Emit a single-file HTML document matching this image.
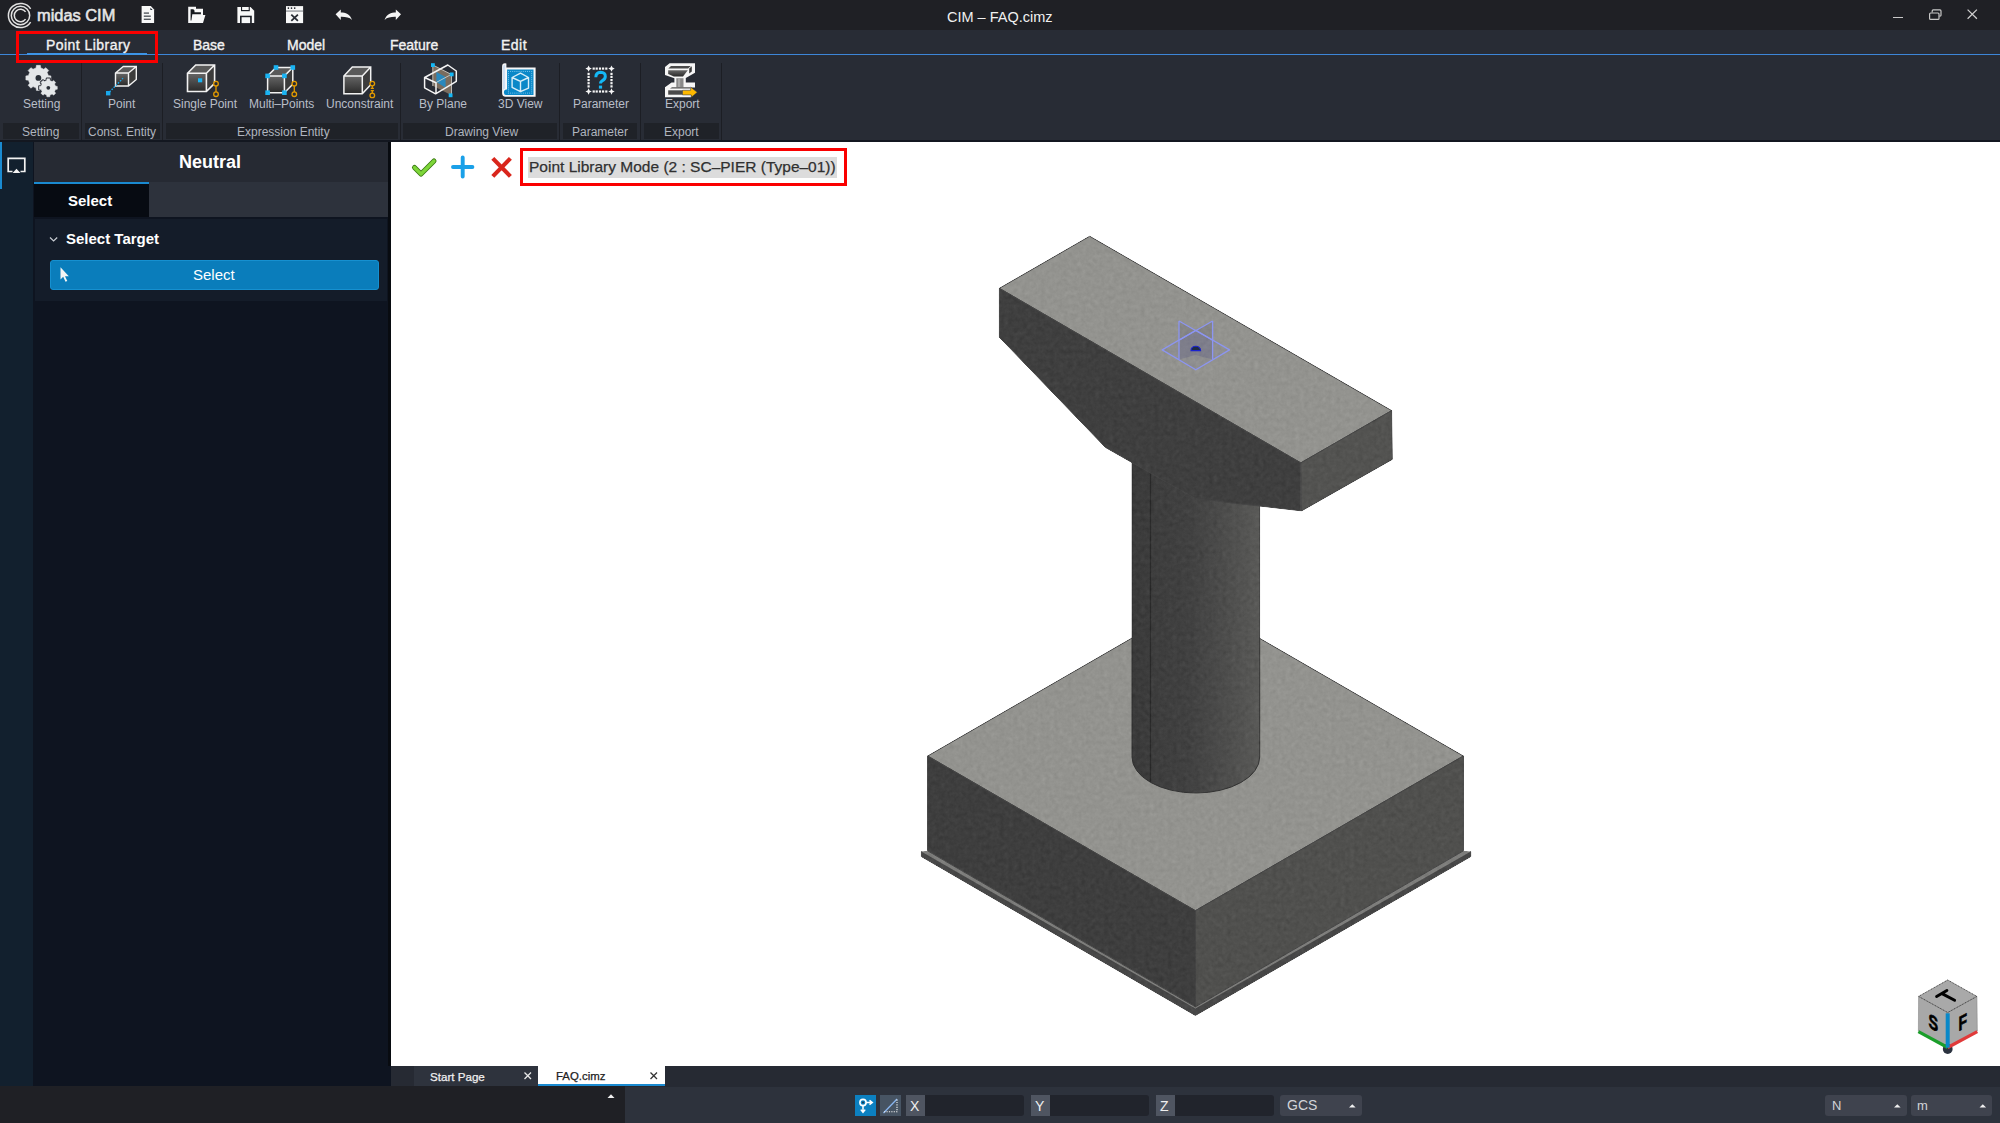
<!DOCTYPE html>
<html><head><meta charset="utf-8">
<style>
*{margin:0;padding:0;box-sizing:border-box}
html,body{width:2000px;height:1123px;overflow:hidden;background:#262a33;font-family:"Liberation Sans",sans-serif}
.a{position:absolute}
.t{position:absolute;white-space:nowrap;line-height:1}
#title{left:0;top:0;width:2000px;height:30px;background:#1f2025}
#menu{left:0;top:30px;width:2000px;height:25px;background:#282c35}
#ribbon{left:0;top:55px;width:2000px;height:87px;background:#282c35}
.mt{color:#f2f2f2;font-size:14px;top:37.5px;-webkit-text-stroke:0.35px #f2f2f2}
.rl{color:#b9bec8;font-size:12px;top:97.5px}
.gl{top:123px;height:16px;background:#1f2228}
.gt{color:#b0b5bf;font-size:12px;top:126px}
.sep{top:63px;width:1px;height:77px;background:#1c1e24}
</style></head><body>
<div id="title" class="a"></div>
<div id="menu" class="a"></div>
<div id="ribbon" class="a"></div>

<!-- logo -->
<svg class="a" style="left:4px;top:0px" width="34" height="32" viewBox="4 0 34 32">
 <g fill="none" stroke="#e2e2e2" stroke-width="1.5">
  <path d="M30.65,8.91 A12.1,12.1 0 1 0 30.65,22.09"/>
  <circle cx="20.5" cy="15.5" r="9.2"/>
  <path d="M25.58,11.94 A6.2,6.2 0 1 0 25.58,19.06"/>
 </g>
</svg>
<div class="t" style="left:37px;top:7px;font-size:16.4px;color:#e6e6e6;-webkit-text-stroke:0.55px #e6e6e6">midas CIM</div>
<!-- title -->
<div class="t" style="left:947px;top:10px;font-size:14.5px;color:#f0f0f0">CIM &#8211; FAQ.cimz</div>

<!-- window controls -->
<div class="a" style="left:1892.6px;top:16.5px;width:10.5px;height:1.3px;background:#c8c8c8"></div>
<svg class="a" style="left:1926px;top:7px" width="18" height="15" viewBox="1926 7 18 15"><g fill="none" stroke="#c8c8c8" stroke-width="1.2"><rect x="1929.6" y="13" width="9.4" height="6.4" rx="1"/><path d="M1932.2,12.6 V10.9 Q1932.2,9.9 1933.2,9.9 H1940 Q1941,9.9 1941,10.9 V15.3 Q1941,16.1 1940,16.1 H1939.4"/></g></svg>
<svg class="a" style="left:1965px;top:7px" width="15" height="14" viewBox="1965 7 15 14"><g stroke="#cfcfcf" stroke-width="1.25"><path d="M1967.6,9.6 L1976.9,18.7 M1976.9,9.6 L1967.6,18.7"/></g></svg>

<!-- menu tabs -->
<div class="a" style="left:0;top:54px;width:2000px;height:1.3px;background:#3d86d8"></div>
<div class="a" style="left:0;top:140px;width:2000px;height:2px;background:#131720"></div>
<div class="a" style="left:27px;top:53px;width:120px;height:2px;background:#3d95e8"></div>
<div class="t mt" style="left:46px;letter-spacing:0.45px">Point Library</div>
<div class="t mt" style="left:193px">Base</div>
<div class="t mt" style="left:287px">Model</div>
<div class="t mt" style="left:390px">Feature</div>
<div class="t mt" style="left:501px;letter-spacing:0.5px">Edit</div>
<div class="a" style="left:16px;top:31px;width:142px;height:32px;border:3px solid #fa0000"></div>

<!-- ribbon group strips -->
<div class="a gl" style="left:3px;width:76px"></div>
<div class="a gl" style="left:85px;width:75px"></div>
<div class="a gl" style="left:166px;width:232px"></div>
<div class="a gl" style="left:403px;width:154px"></div>
<div class="a gl" style="left:563px;width:74px"></div>
<div class="a gl" style="left:644px;width:75px"></div>
<div class="a sep" style="left:81px"></div>
<div class="a sep" style="left:162px"></div>
<div class="a sep" style="left:400px"></div>
<div class="a sep" style="left:559px"></div>
<div class="a sep" style="left:640px"></div>
<div class="a sep" style="left:721px"></div>

<div class="t gt" style="left:22px">Setting</div>
<div class="t gt" style="left:88px">Const. Entity</div>
<div class="t gt" style="left:237px">Expression Entity</div>
<div class="t gt" style="left:445px">Drawing View</div>
<div class="t gt" style="left:572px">Parameter</div>
<div class="t gt" style="left:664px">Export</div>

<div class="t rl" style="left:23px">Setting</div>
<div class="t rl" style="left:108px">Point</div>
<div class="t rl" style="left:173px">Single Point</div>
<div class="t rl" style="left:249px">Multi&#8211;Points</div>
<div class="t rl" style="left:326px">Unconstraint</div>
<div class="t rl" style="left:419px">By Plane</div>
<div class="t rl" style="left:498px">3D View</div>
<div class="t rl" style="left:573px">Parameter</div>
<div class="t rl" style="left:665px">Export</div>

<svg class="a" style="left:0;top:55px" width="730" height="60" viewBox="0 55 730 60"><defs><linearGradient id="cubeg" x1="0" x2="0" y1="0" y2="1"><stop offset="0" stop-color="#666"/><stop offset="1" stop-color="#2a2a2a"/></linearGradient></defs><path d="M34.50,68.48 L36.02,67.98 L36.41,65.36 L40.39,65.36 L40.78,67.98 L42.30,68.48 L43.73,69.20 L45.86,67.63 L48.67,70.44 L47.10,72.57 L47.82,74.00 L48.32,75.52 L50.94,75.91 L50.94,79.89 L48.32,80.28 L47.82,81.80 L47.10,83.23 L48.67,85.36 L45.86,88.17 L43.73,86.60 L42.30,87.32 L40.78,87.82 L40.39,90.44 L36.41,90.44 L36.02,87.82 L34.50,87.32 L33.07,86.60 L30.94,88.17 L28.13,85.36 L29.70,83.23 L28.98,81.80 L28.48,80.28 L25.86,79.89 L25.86,75.91 L28.48,75.52 L28.98,74.00 L29.70,72.57 L28.13,70.44 L30.94,67.63 L33.07,69.20Z" fill="#e4e7e9" stroke="#e4e7e9" stroke-width="0.5" stroke-linejoin="round"/><circle cx="38.4" cy="77.9" r="2.9" fill="#2a3038"/><path d="M45.51,81.06 L46.60,80.70 L46.88,78.81 L49.72,78.81 L50.00,80.70 L51.09,81.06 L52.11,81.58 L53.65,80.44 L55.66,82.45 L54.52,83.99 L55.04,85.01 L55.40,86.10 L57.29,86.38 L57.29,89.22 L55.40,89.50 L55.04,90.59 L54.52,91.61 L55.66,93.15 L53.65,95.16 L52.11,94.02 L51.09,94.54 L50.00,94.90 L49.72,96.79 L46.88,96.79 L46.60,94.90 L45.51,94.54 L44.49,94.02 L42.95,95.16 L40.94,93.15 L42.08,91.61 L41.56,90.59 L41.20,89.50 L39.31,89.22 L39.31,86.38 L41.20,86.10 L41.56,85.01 L42.08,83.99 L40.94,82.45 L42.95,80.44 L44.49,81.58Z" fill="#282c35" stroke="#282c35" stroke-width="2.4" stroke-linejoin="round"/><path d="M45.51,81.06 L46.60,80.70 L46.88,78.81 L49.72,78.81 L50.00,80.70 L51.09,81.06 L52.11,81.58 L53.65,80.44 L55.66,82.45 L54.52,83.99 L55.04,85.01 L55.40,86.10 L57.29,86.38 L57.29,89.22 L55.40,89.50 L55.04,90.59 L54.52,91.61 L55.66,93.15 L53.65,95.16 L52.11,94.02 L51.09,94.54 L50.00,94.90 L49.72,96.79 L46.88,96.79 L46.60,94.90 L45.51,94.54 L44.49,94.02 L42.95,95.16 L40.94,93.15 L42.08,91.61 L41.56,90.59 L41.20,89.50 L39.31,89.22 L39.31,86.38 L41.20,86.10 L41.56,85.01 L42.08,83.99 L40.94,82.45 L42.95,80.44 L44.49,81.58Z" fill="#e4e7e9" stroke="#e4e7e9" stroke-width="0.5" stroke-linejoin="round"/><circle cx="48.3" cy="87.8" r="1.9" fill="#2a3038"/><polygon points="115.5,73 123.3,66.5 136.3,66.5 128.5,73" fill="#5a5a5a"/><polygon points="128.5,73 136.3,66.5 136.3,79.5 128.5,86" fill="#3c3c3c"/><rect x="115.5" y="73" width="13.0" height="13" fill="url(#cubeg)"/><path d="M115.5,73 L123.3,66.5 H136.3 V79.5 L128.5,86 H115.5 Z M115.5,73 H128.5 V86 M128.5,73 L136.3,66.5" fill="none" stroke="#f2f2f2" stroke-width="1.4" stroke-linejoin="miter"/><path d="M109.5,92 L123,78.2" stroke="#19a8ec" stroke-width="1.4" stroke-dasharray="1.6,1.4"/><rect x="106" y="91" width="4.4" height="4.4" fill="#19a8ec"/><polygon points="187.5,73.2 195.7,65.0 214.6,65.0 206.4,73.2" fill="#5a5a5a"/><polygon points="206.4,73.2 214.6,65.0 214.6,83.3 206.4,91.5" fill="#3c3c3c"/><rect x="187.5" y="73.2" width="18.900000000000006" height="18.299999999999997" fill="url(#cubeg)"/><path d="M187.5,73.2 L195.7,65.0 H214.6 V83.3 L206.4,91.5 H187.5 Z M187.5,73.2 H206.4 V91.5 M206.4,73.2 L214.6,65.0" fill="none" stroke="#f2f2f2" stroke-width="1.6" stroke-linejoin="miter"/><rect x="198" y="78.3" width="4.2" height="4" fill="#19b4f4"/><g stroke="#e39b00" stroke-width="1.3" fill="#282c35"><path d="M216,83.7 V94.2" fill="none"/><circle cx="216" cy="83.7" r="2.3"/><circle cx="216" cy="94.2" r="2.3"/></g><polygon points="267.6,75.9 276.0,67.5 292.79999999999995,67.5 284.4,75.9" fill="#5a5a5a"/><polygon points="284.4,75.9 292.79999999999995,67.5 292.79999999999995,84.3 284.4,92.7" fill="#3c3c3c"/><rect x="267.6" y="75.9" width="16.799999999999955" height="16.799999999999997" fill="url(#cubeg)"/><path d="M267.6,75.9 L276.0,67.5 H292.79999999999995 V84.3 L284.4,92.7 H267.6 Z M267.6,75.9 H284.4 V92.7 M284.4,75.9 L292.79999999999995,67.5" fill="none" stroke="#f2f2f2" stroke-width="1.5" stroke-linejoin="miter"/><rect x="265.3" y="73.60000000000001" width="4.6" height="4.6" fill="#19b4f4"/><rect x="282.09999999999997" y="73.60000000000001" width="4.6" height="4.6" fill="#19b4f4"/><rect x="265.3" y="90.4" width="4.6" height="4.6" fill="#19b4f4"/><rect x="282.09999999999997" y="90.4" width="4.6" height="4.6" fill="#19b4f4"/><rect x="273.7" y="65.2" width="4.6" height="4.6" fill="#19b4f4"/><rect x="290.5" y="65.2" width="4.6" height="4.6" fill="#19b4f4"/><g stroke="#e39b00" stroke-width="1.3" fill="#282c35"><path d="M294.3,83.7 V94.2" fill="none"/><circle cx="294.3" cy="83.7" r="2.3"/><circle cx="294.3" cy="94.2" r="2.3"/></g><polygon points="343.9,75.9 352.29999999999995,66.9 370.7,66.9 362.3,75.9" fill="#5a5a5a"/><polygon points="362.3,75.9 370.7,66.9 370.7,84.7 362.3,93.7" fill="#3c3c3c"/><rect x="343.9" y="75.9" width="18.400000000000034" height="17.799999999999997" fill="url(#cubeg)"/><path d="M343.9,75.9 L352.29999999999995,66.9 H370.7 V84.7 L362.3,93.7 H343.9 Z M343.9,75.9 H362.3 V93.7 M362.3,75.9 L370.7,66.9" fill="none" stroke="#f2f2f2" stroke-width="1.5" stroke-linejoin="miter"/><g stroke="#e39b00" stroke-width="1.3" fill="#282c35"><path d="M372.3,86.0 V88.3 M372.3,90.7 V93.0 M370.7,88.3 h3.2 M370.7,90.7 h3.2" fill="none"/><circle cx="372.3" cy="83.6" r="2.3"/><circle cx="372.3" cy="95.4" r="2.3"/></g><polygon points="432.8,65 451.5,74.5 451.5,95.3 432.8,85.8" fill="#7a6c5e"/>
<polygon points="436.4,72.1 445.6,77.1 445.6,87.8 436.4,82.1" fill="#2a88bc"/>
<g fill="none" stroke="#d8d4cc" stroke-width="0.9" opacity="0.9"><path d="M432.8,65 V86 M451.5,74.5 V95.3 M432.8,65 L451.5,74.5 M436.4,82.4 L451.5,74.3"/></g>
<g fill="none" stroke="#f4f4f4" stroke-width="1.5" stroke-linejoin="round">
<path d="M424.6,77.5 V87.8 L435.6,93.8 L451,84.6 L456.3,81.4 V71 L447.8,65 L424.6,77.5 L436,82.8 V93.5"/>
</g>
<g fill="#14b8f6"><rect x="431" y="63.2" width="3.8" height="3.8"/><rect x="449.8" y="72.5" width="3.8" height="3.8"/><rect x="448.7" y="93.4" width="3.8" height="3.8"/></g>
<path d="M502.1,66.5 Q502.1,63.2 505,63.2 L506.4,63.4 V67.5 H535.6 V96.7 H505.5 Q502.1,96.7 502.1,93 Z" fill="#f8f8f8"/>
<path d="M503,67 Q503.2,64.6 505.2,64.5 V88.6 Q503.4,89.2 503,90 Z" fill="#cfe0f4"/>
<path d="M507.1,69.6 H533.5 V94.9 H506 Q503.9,94.9 503.9,92.4 Q503.9,89.8 506.5,89.6 H507.1 Z" fill="#0a88c8"/>
<g fill="#8fd0f2"><rect x="508.05" y="70.95" width="0.9" height="0.9"/><rect x="508.05" y="92.65" width="0.9" height="0.9"/><rect x="510.16" y="70.95" width="0.9" height="0.9"/><rect x="510.16" y="92.65" width="0.9" height="0.9"/><rect x="512.27" y="70.95" width="0.9" height="0.9"/><rect x="512.27" y="92.65" width="0.9" height="0.9"/><rect x="514.38" y="70.95" width="0.9" height="0.9"/><rect x="514.38" y="92.65" width="0.9" height="0.9"/><rect x="516.49" y="70.95" width="0.9" height="0.9"/><rect x="516.49" y="92.65" width="0.9" height="0.9"/><rect x="518.60" y="70.95" width="0.9" height="0.9"/><rect x="518.60" y="92.65" width="0.9" height="0.9"/><rect x="520.70" y="70.95" width="0.9" height="0.9"/><rect x="520.70" y="92.65" width="0.9" height="0.9"/><rect x="522.81" y="70.95" width="0.9" height="0.9"/><rect x="522.81" y="92.65" width="0.9" height="0.9"/><rect x="524.92" y="70.95" width="0.9" height="0.9"/><rect x="524.92" y="92.65" width="0.9" height="0.9"/><rect x="527.03" y="70.95" width="0.9" height="0.9"/><rect x="527.03" y="92.65" width="0.9" height="0.9"/><rect x="529.14" y="70.95" width="0.9" height="0.9"/><rect x="529.14" y="92.65" width="0.9" height="0.9"/><rect x="531.25" y="70.95" width="0.9" height="0.9"/><rect x="531.25" y="92.65" width="0.9" height="0.9"/><rect x="508.05" y="72.92" width="0.9" height="0.9"/><rect x="531.25" y="72.92" width="0.9" height="0.9"/><rect x="508.05" y="74.90" width="0.9" height="0.9"/><rect x="531.25" y="74.90" width="0.9" height="0.9"/><rect x="508.05" y="76.87" width="0.9" height="0.9"/><rect x="531.25" y="76.87" width="0.9" height="0.9"/><rect x="508.05" y="78.84" width="0.9" height="0.9"/><rect x="531.25" y="78.84" width="0.9" height="0.9"/><rect x="508.05" y="80.81" width="0.9" height="0.9"/><rect x="531.25" y="80.81" width="0.9" height="0.9"/><rect x="508.05" y="82.79" width="0.9" height="0.9"/><rect x="531.25" y="82.79" width="0.9" height="0.9"/><rect x="508.05" y="84.76" width="0.9" height="0.9"/><rect x="531.25" y="84.76" width="0.9" height="0.9"/><rect x="508.05" y="86.73" width="0.9" height="0.9"/><rect x="531.25" y="86.73" width="0.9" height="0.9"/><rect x="508.05" y="88.70" width="0.9" height="0.9"/><rect x="531.25" y="88.70" width="0.9" height="0.9"/><rect x="508.05" y="90.68" width="0.9" height="0.9"/><rect x="531.25" y="90.68" width="0.9" height="0.9"/></g>
<g fill="none" stroke="#d8eef8" stroke-width="1.4" stroke-linejoin="round"><path d="M520.5,73.2 L528.5,77.5 V88.1 L520.5,91.7 L512.1,87.4 V77.5 Z M512.1,77.5 L520.5,81.4 L528.5,77.5 M520.5,81.4 V91.7"/></g>
<g fill="#f6f6f6"><rect x="592.60" y="67.5" width="2.2" height="2.2"/><rect x="592.60" y="90.4" width="2.2" height="2.2"/><rect x="595.60" y="67.5" width="2.2" height="2.2"/><rect x="595.60" y="90.4" width="2.2" height="2.2"/><rect x="598.90" y="67.5" width="2.2" height="2.2"/><rect x="598.90" y="90.4" width="2.2" height="2.2"/><rect x="602.00" y="67.5" width="2.2" height="2.2"/><rect x="602.00" y="90.4" width="2.2" height="2.2"/><rect x="605.20" y="67.5" width="2.2" height="2.2"/><rect x="605.20" y="90.4" width="2.2" height="2.2"/><rect x="587.5" y="72.80" width="2.2" height="2.2"/><rect x="610.4" y="72.80" width="2.2" height="2.2"/><rect x="587.5" y="75.80" width="2.2" height="2.2"/><rect x="610.4" y="75.80" width="2.2" height="2.2"/><rect x="587.5" y="79.00" width="2.2" height="2.2"/><rect x="610.4" y="79.00" width="2.2" height="2.2"/><rect x="587.5" y="82.10" width="2.2" height="2.2"/><rect x="610.4" y="82.10" width="2.2" height="2.2"/><rect x="587.5" y="85.30" width="2.2" height="2.2"/><rect x="610.4" y="85.30" width="2.2" height="2.2"/><path d="M585.4,68.6 L587.6,67.5 L588.6,65.39999999999999 L589.6,67.5 L591.8000000000001,68.6 L589.6,69.69999999999999 L588.6,71.8 L587.6,69.69999999999999 Z"/><path d="M608.3,68.6 L610.5,67.5 L611.5,65.39999999999999 L612.5,67.5 L614.7,68.6 L612.5,69.69999999999999 L611.5,71.8 L610.5,69.69999999999999 Z"/><path d="M585.4,91.5 L587.6,90.4 L588.6,88.3 L589.6,90.4 L591.8000000000001,91.5 L589.6,92.6 L588.6,94.7 L587.6,92.6 Z"/><path d="M608.3,91.5 L610.5,90.4 L611.5,88.3 L612.5,90.4 L614.7,91.5 L612.5,92.6 L611.5,94.7 L610.5,92.6 Z"/></g><path d="M595.8,77.2 Q596,72.4 600.6,72.3 Q605.4,72.4 605.3,76.6 Q605.2,79 602.4,80.6 Q600.4,81.8 600.4,83.6" fill="none" stroke="#14b8f6" stroke-width="3"/><rect x="598.9" y="85.6" width="3.2" height="3" fill="#14b8f6"/><path d="M669.6,63.2 H695 V72.7 L685.8,78 V82.6 H695 V87.6 H691 V97.2 H665 V87.3 L671.6,82.6 H674.4 V78.3 L665,75.1 V67 Z" fill="#f6f6f6"/>
<path d="M668.3,68.6 L671,65.9 H690.8 L688.1,68.6 Z" fill="#4a4a4a"/>
<path d="M689.2,68.6 L691.8,66.3 V71.6 L689.2,73.4 Z" fill="#3a3a3a"/>
<path d="M668.2,70.3 H687.8 L683,76.4 H673.9 L668.2,73.9 Z" fill="url(#cubeg)"/>
<rect x="676.3" y="78.2" width="7.2" height="9.2" fill="#8a8a8a"/>
<rect x="678" y="78.2" width="2.2" height="9.2" fill="#a8a8a8"/>
<path d="M670,88.4 L672,87.2 H690 L690.5,88.6 Z" fill="#555"/>
<rect x="668.2" y="90.3" width="14.5" height="4.4" fill="#4a4a4a"/>
<path d="M682.5,90.3 H690.6 V87.1 L697.3,92.3 L691.2,97.4 V94.9 H682.5 Z" fill="#fdb800" stroke="#1a2a50" stroke-width="0.5"/>
</svg>
<!-- left icon bar -->
<div class="a" style="left:0;top:142px;width:33px;height:944px;background:#12202e"></div>
<div class="a" style="left:0;top:142px;width:2px;height:47px;background:#1a8ad0"></div>
<!-- panel -->
<div class="a" style="left:33px;top:142px;width:358px;height:944px;background:#0e1420"></div>
<div class="a" style="left:34px;top:142px;width:354px;height:40px;background:#262a33"></div>
<div class="t" style="left:179px;top:153px;font-size:18px;font-weight:bold;color:#fff">Neutral</div>
<div class="a" style="left:34px;top:182px;width:354px;height:35px;background:#2d323c"></div>
<div class="a" style="left:34px;top:182px;width:115px;height:35px;background:#070b12;border-top:2px solid #1a8ad0"></div>
<div class="t" style="left:68px;top:193px;font-size:15px;font-weight:bold;color:#fff">Select</div>
<div class="a" style="left:35px;top:219px;width:352px;height:82px;background:#141c29"></div>
<div class="t" style="left:66px;top:231px;font-size:15px;font-weight:bold;color:#fff">Select Target</div>
<div class="a" style="left:50px;top:260px;width:329px;height:30px;background:#0a7dbb;border-radius:3px;border:1px solid #1690d0"></div>
<div class="t" style="left:193px;top:267px;font-size:15px;color:#fff">Select</div>

<!-- viewport -->
<div class="a" style="left:388px;top:142px;width:4px;height:924px;background:#080b10"></div>
<div class="a" style="left:391px;top:142px;width:1609px;height:924px;background:#fff"></div>


<!-- 3D model -->
<svg class="a" style="left:391px;top:142px" width="1609" height="924" viewBox="391 142 1609 924">
 <defs>
  <filter id="tex" filterUnits="userSpaceOnUse" x="900" y="220" width="600" height="810" color-interpolation-filters="sRGB">
   <feTurbulence type="fractalNoise" baseFrequency="0.22" numOctaves="3" seed="11" result="nz"/>
   <feColorMatrix in="nz" type="matrix" values="0.33 0.33 0.33 0 0  0.33 0.33 0.33 0 0  0.33 0.33 0.33 0 0  0 0 0 0 1" result="gn"/>
   <feComposite in="SourceGraphic" in2="gn" operator="arithmetic" k1="0" k2="1" k3="0.12" k4="-0.06" result="t"/>
   <feComposite in="t" in2="SourceAlpha" operator="in"/>
  </filter>
  <linearGradient id="colg" x1="0" x2="1" y1="0" y2="0">
   <stop offset="0" stop-color="#3a3a3a"/><stop offset="0.2" stop-color="#3e3e3e"/><stop offset="0.45" stop-color="#414141"/><stop offset="0.75" stop-color="#4e4e4d"/><stop offset="1" stop-color="#5a5a58"/>
  </linearGradient>
 </defs>
 <g filter="url(#tex)">
 <g stroke="#454545" stroke-width="1" stroke-linejoin="round">
  <!-- base plate -->
  <polygon points="921.3,851.5 1195.4,1008.6 1470.8,851.5 1470.8,856.6 1195.4,1015.5 921.3,856.6" fill="#474747"/>
  <polygon points="921.3,851.5 1195.4,1008.6 1470.8,851.5 1463.4,850.8 1195.4,1006.8 927.6,850.8" fill="#7d7d7b" stroke="none"/>
  <!-- footing -->
  <polygon points="1195.6,601.3 927.6,756 1195.4,910.7 1463.4,756" fill="#93938f"/>
  <polygon points="927.6,756 1195.4,910.7 1195.4,1006.8 927.6,850.8" fill="#3e3e3e"/>
  <polygon points="1195.4,910.7 1463.4,756 1463.4,850.8 1195.4,1006.8" fill="#50504e"/>
 </g>
 <!-- column -->
 <path d="M1132,440 V757 A63.8,36 0 0 0 1259.7,757 V440 Z" fill="url(#colg)" stroke="#2e2e2e" stroke-width="0.9"/>
 <line x1="1150.5" y1="470" x2="1150.5" y2="782" stroke="#2a2a2a" stroke-width="1.2"/>
 <g stroke="#454545" stroke-width="1" stroke-linejoin="round">
  <!-- cap -->
  <polygon points="1089.7,236.2 999.3,288.3 1300.8,462.9 1391.7,410.6" fill="#93938f"/>
  <polygon points="999.3,288.3 999.3,337.2 1105.5,447.5 1195.6,498.7 1300.8,510.8 1300.8,462.9" fill="#3f3f3f"/>
  <polygon points="1300.8,462.9 1391.7,410.6 1392.3,459.4 1301.4,511" fill="#535351"/>
 </g>
  </g>
 <!-- point marker -->
 <polygon points="1162.2,349.9 1195.8,330.3 1229.5,349.9 1195.8,369.8" fill="rgba(90,90,150,0.07)"/>
 <polygon points="1179,321 1195.8,330.3 1179,340.3" fill="rgba(40,40,70,0.13)"/>
 <polygon points="1212.6,321 1195.8,330.3 1212.6,340.3" fill="rgba(40,40,70,0.13)"/>
 <polygon points="1179,340.3 1195.8,330.3 1212.6,340.3 1212.6,359.6 1195.8,355 1179,359.6" fill="rgba(50,50,120,0.17)"/>
 <g stroke="#8c95f2" stroke-width="1.3" fill="none" stroke-linejoin="round">
  <polygon points="1162.2,349.9 1195.8,330.3 1229.5,349.9 1195.8,369.8"/>
  <path d="M1179,321 L1212.6,340.3 M1212.6,321 L1179,340.3 M1179,321 V359.6 M1212.6,321 V359.6"/>
 </g>
 <path d="M1191,350.6 A4.8,4.4 0 0 1 1200.6,350.6 Z" fill="#1d2a45" stroke="#1a22d0" stroke-width="1.1"/>
 <!-- view cube -->
 <g stroke="#888" stroke-width="0.6">
  <polygon points="1947.7,1012.5 1918.6,996.4 1918.4,1031 1947.7,1047" fill="#a8a8a8"/>
  <polygon points="1947.7,1012.5 1976.9,996.4 1977.3,1031 1947.7,1047" fill="#a8a8a8"/>
 </g>
 <polygon points="1947.7,980 1918.6,996.4 1947.7,1012.5 1976.9,996.4" fill="#a9a9a9" stroke="#3a3a3a" stroke-width="0.9" stroke-dasharray="1.2,0.6"/>
 <circle cx="1947.7" cy="1049" r="4.9" fill="#2b3340"/>
 <path d="M1918.4,1031.6 L1947.7,1047.5" stroke="#1a9e2a" stroke-width="3.2"/>
 <path d="M1947.7,1047.5 L1977.3,1031.6" stroke="#e03a3a" stroke-width="3.2"/>
 <path d="M1947.7,1013.3 L1947.7,1047.7" stroke="#0a88c8" stroke-width="4"/>
 <g fill="none" stroke="#000" stroke-width="2.9" stroke-linecap="round">
  <path d="M1936.6,996.6 L1946.9,990.6 M1942,993.6 L1954.6,1000.3"/>
 </g>
 <g transform="translate(1933.2,1022.2) matrix(1,0.55,0,1,0,0)"><text x="0" y="7.4" text-anchor="middle" font-family="Liberation Sans" font-weight="bold" font-size="20" transform="scale(0.72,1)" fill="#000" stroke="#000" stroke-width="0.7">S</text></g>
 <g transform="translate(1962.8,1021.6) matrix(1,-0.535,0,1,0,0)"><text x="0" y="7.4" text-anchor="middle" font-family="Liberation Sans" font-weight="bold" font-size="20" transform="scale(0.7,1)" fill="#000" stroke="#000" stroke-width="0.7">F</text></g>
</svg>

<!-- viewport toolbar -->
<svg class="a" style="left:405px;top:150px" width="120" height="36" viewBox="405 150 120 36">
 <path d="M414.5,167.5 L421,174 L434,161" fill="none" stroke="#3a7a10" stroke-width="5" stroke-linecap="round" stroke-linejoin="round"/>
 <path d="M414.5,167.5 L421,174 L434,161" fill="none" stroke="#7ed63a" stroke-width="3.2" stroke-linecap="round" stroke-linejoin="round"/>
 <path d="M462.7,157.4 V176.6 M453,167 H472.4" stroke="#1aa0e8" stroke-width="3.9" stroke-linecap="round"/>
 <path d="M492.8,158.4 L510.4,176.4 M510.4,158.4 L492.8,176.4" stroke="#d9261c" stroke-width="4.2" stroke-linecap="butt"/>
</svg>
<div class="a" style="left:520px;top:148px;width:327px;height:38px;border:3px solid #fa0000"></div>
<div class="a" style="left:528px;top:157px;width:309px;height:21px;background:#dcdcdc"></div>
<div class="t" style="left:529px;top:159px;font-size:15.5px;color:#303030;-webkit-text-stroke:0.25px #303030">Point Library Mode (2 : SC&#8211;PIER (Type&#8211;01))</div>

<!-- doc tabs -->
<div class="a" style="left:391px;top:1066px;width:1609px;height:20px;background:#262a33"></div>
<div class="a" style="left:414px;top:1066px;width:124px;height:20px;background:#2e333d"></div>
<div class="t" style="left:430px;top:1071px;font-size:11.6px;color:#f0f0f0;-webkit-text-stroke:0.25px #f0f0f0">Start Page</div>
<div class="a" style="left:538px;top:1066px;width:127px;height:20px;background:#fff;border-bottom:2px solid #1a8ad0"></div>
<div class="t" style="left:556px;top:1071px;font-size:11.4px;color:#222;-webkit-text-stroke:0.25px #222">FAQ.cimz</div>

<!-- status bar -->
<div class="a" style="left:0;top:1086px;width:625px;height:37px;background:#1f2025"></div>
<div class="a" style="left:625px;top:1086px;width:1375px;height:37px;background:#2d323c"></div>


<!-- title bar icons -->
<svg class="a" style="left:138px;top:4px" width="270" height="22" viewBox="138 4 270 22">
 <path d="M141.6,5.9 H150.8 L154.1,9.4 V22.9 H141.6 Z" fill="#f8f8f8"/>
 <path d="M150.4,7.8 L152.6,9.9 H150.4 Z" fill="#1a2530"/>
 <g fill="#555a60"><rect x="143.8" y="12.4" width="5.2" height="1.4"/><rect x="143.8" y="15.5" width="7" height="1.4"/><rect x="143.8" y="18.6" width="7" height="1.4"/></g>
 <!-- folder -->
 <path d="M188.2,6.8 H196 V8.7 H203 V15 H205.4 L203,22.9 H188.2 Z" fill="#f8f8f8"/>
 <path d="M190.6,9.2 H193.3 L194.5,10.6 V12.3 H200.9 V14.3 H192.3 L191.4,20.6 H190.6 Z" fill="#15181d"/>
 <!-- save -->
 <path d="M237.4,7 H250.5 L254.2,10.7 V23.1 H237.4 Z" fill="#f8f8f8"/>
 <rect x="241" y="7" width="8.8" height="4.2" fill="#1d2026"/>
 <rect x="242.1" y="7" width="6.6" height="3" fill="#f8f8f8"/>
 <rect x="240" y="15.7" width="11.8" height="7.4" fill="#1d2026"/>
 <rect x="241.6" y="17.2" width="8.5" height="5.9" fill="#f8f8f8"/>
 <!-- close doc -->
 <rect x="286" y="6.1" width="17.1" height="17" fill="#f8f8f8"/>
 <g fill="#1d2026"><circle cx="288.4" cy="8.1" r="0.85"/><circle cx="291.5" cy="8.1" r="0.85"/><circle cx="294.7" cy="8.1" r="0.85"/></g>
 <rect x="286" y="10.5" width="17.1" height="1.1" fill="#808389"/>
 <g stroke="#2a2e35" stroke-width="1.8"><path d="M291.3,14.6 L297.9,20.9 M297.9,14.6 L291.3,20.9"/></g>
 <!-- undo -->
 <path d="M335.6 14.2l5.2-4.7v3c4.6 0 9.4 1.6 11.2 7.4c-2.6-2.6-6.6-3.2-11.2-3.1v3.1z" fill="#f4f4f4"/>
 <!-- redo -->
 <path d="M401 14.2l-5.2-4.7v3c-4.6 0-9.4 1.6-11.2 7.4c2.6-2.6 6.6-3.2 11.2-3.1v3.1z" fill="#f4f4f4"/>
</svg>

<!-- left bar icon -->
<svg class="a" style="left:6px;top:155px" width="22" height="20" viewBox="6 155 22 20">
 <path d="M12.5,171.5 H8.2 V158.3 H24.8 V171.5 H20.5" fill="none" stroke="#f2f2f2" stroke-width="1.7"/>
 <path d="M12.6,173 L16.5,168.8 L20.4,173 Z" fill="#f2f2f2"/>
</svg>
<!-- chevron -->
<svg class="a" style="left:48px;top:234px" width="12" height="10" viewBox="48 234 12 10">
 <path d="M50,237.5 L53.6,241 L57.2,237.5" fill="none" stroke="#c8ccd2" stroke-width="1.2"/>
</svg>
<!-- cursor -->
<svg class="a" style="left:58px;top:265px" width="14" height="20" viewBox="58 265 14 20">
 <path d="M60.5,267.3 L60.5,279.5 L63.2,276.8 L65.5,281.8 L67.3,281 L65,276.2 L68.8,276.2 Z" fill="#f4f4f4"/>
</svg>
<!-- doc tab close icons -->
<svg class="a" style="left:520px;top:1068px" width="145" height="16" viewBox="520 1068 145 16">
 <path d="M524.5,1072.5 L531,1079 M531,1072.5 L524.5,1079" stroke="#e8e8e8" stroke-width="1.3"/>
 <path d="M650.5,1072.5 L657,1079 M657,1072.5 L650.5,1079" stroke="#333" stroke-width="1.3"/>
</svg>
<!-- status bar up arrow -->
<svg class="a" style="left:605px;top:1092px" width="12" height="8" viewBox="605 1092 12 8">
 <path d="M607.5,1098 L611,1094.3 L614.5,1098 Z" fill="#f0f0f0"/>
</svg>
<div class="a" style="left:625px;top:1086px;width:1375px;height:1px;background:#262a33"></div>
<!-- status toolbar -->
<div class="a" style="left:855px;top:1095px;width:21px;height:21px;background:#0c80c0"></div>
<svg class="a" style="left:855px;top:1095px" width="21" height="21" viewBox="855 1095 21 21">
 <circle cx="863" cy="1102.5" r="3.1" fill="none" stroke="#fff" stroke-width="1.6"/>
 <circle cx="863" cy="1102.5" r="1" fill="#13314a"/>
 <path d="M863,1105.6 V1112 M860.8,1109.6 L863,1112.3 L865.2,1109.6 M866,1102.5 H872 M869.5,1100.3 L872.3,1102.5 L869.5,1104.7" fill="none" stroke="#fff" stroke-width="1.5"/>
</svg>
<div class="a" style="left:880px;top:1095px;width:21px;height:21px;background:#475463"></div>
<svg class="a" style="left:880px;top:1095px" width="21" height="21" viewBox="880 1095 21 21">
 <path d="M883.5,1113 L897,1099" stroke="#8ab6f0" stroke-width="1.3"/>
 <path d="M897,1099.5 V1111.8 H884" fill="none" stroke="#f0f0f0" stroke-width="1.1" stroke-dasharray="1.2,1.2"/>
</svg>
<div class="a" style="left:906px;top:1095px;width:118px;height:21px;background:#21242c;border-radius:0 3px 3px 0"></div>
<div class="a" style="left:906px;top:1095px;width:19px;height:21px;background:#4f5561"></div>
<div class="t" style="left:910px;top:1099px;font-size:14px;color:#f0f0f0">X</div>
<div class="a" style="left:1031px;top:1095px;width:118px;height:21px;background:#21242c;border-radius:0 3px 3px 0"></div>
<div class="a" style="left:1031px;top:1095px;width:19px;height:21px;background:#4f5561"></div>
<div class="t" style="left:1035px;top:1099px;font-size:14px;color:#f0f0f0">Y</div>
<div class="a" style="left:1156px;top:1095px;width:118px;height:21px;background:#21242c;border-radius:0 3px 3px 0"></div>
<div class="a" style="left:1156px;top:1095px;width:19px;height:21px;background:#4f5561"></div>
<div class="t" style="left:1160px;top:1099px;font-size:14px;color:#f0f0f0">Z</div>
<div class="a" style="left:1280px;top:1095px;width:82px;height:21px;background:#3f434e;border-radius:3px"></div>
<div class="t" style="left:1287px;top:1098px;font-size:14px;color:#d2d4d8">GCS</div>
<div class="a" style="left:1825px;top:1095px;width:82px;height:21px;background:#3f434e;border-radius:3px"></div>
<div class="t" style="left:1832px;top:1099px;font-size:13px;color:#d2d4d8">N</div>
<div class="a" style="left:1911px;top:1095px;width:81px;height:21px;background:#3f434e;border-radius:3px"></div>
<div class="t" style="left:1917px;top:1099px;font-size:13px;color:#d2d4d8">m</div>
<svg class="a" style="left:1340px;top:1098px" width="660" height="14" viewBox="1340 1098 660 14">
 <path d="M1349,1107.6 L1352.3,1104.3 L1355.6,1107.6 Z M1894,1107.6 L1897.3,1104.3 L1900.6,1107.6 Z M1979.5,1107.6 L1982.8,1104.3 L1986.1,1107.6 Z" fill="#f0f0f0"/>
</svg>
</body></html>
